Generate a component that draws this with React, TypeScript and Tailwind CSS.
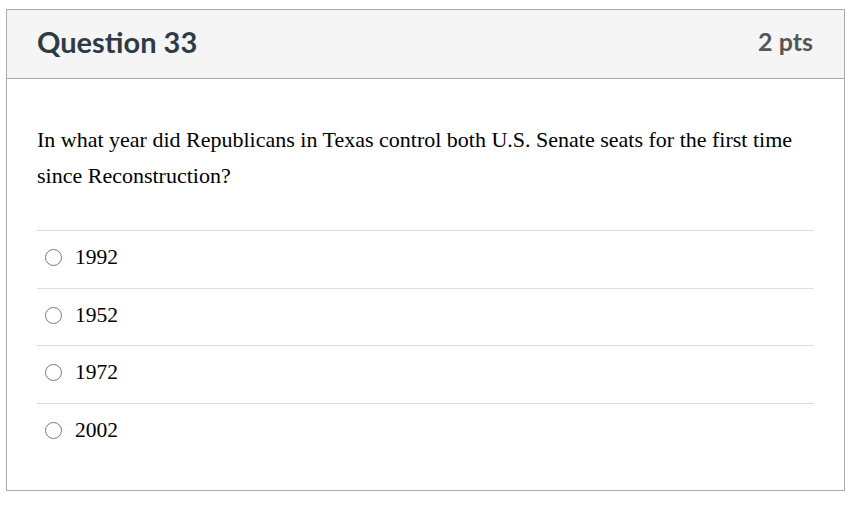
import React from "react";

const answers = ["1992", "1952", "1972", "2002"];

export default function App() {
  return (
    <div className="min-h-screen bg-white pt-[9px] pl-[6px]">
      <div className="w-[839px] border border-[#aaaaaa] bg-white">
        <div className="flex h-[69px] items-center justify-between border-b border-[#aaaaaa] bg-[#f5f5f5] pb-[4px] pl-[30px] pr-[31px] font-['Lato',sans-serif] font-bold">
          <h2 className="text-[29px] text-[#2d3b45]">Question 33</h2>
          <div className="text-[25px] text-[#565656]">2 pts</div>
        </div>
        <div className="px-[30px] pt-[43px] pb-[30px] font-['Liberation_Serif',serif] text-[22px] text-black">
          <p className="leading-[36px]">
            In what year did Republicans in Texas control both U.S. Senate seats for the first time since Reconstruction?
          </p>
          <div className="mt-[36px]">
            {answers.map((a) => (
              <label
                key={a}
                className="flex h-[57.6px] items-center border-t border-[#dddddd] pb-[3px] pl-[8px]"
              >
                <span className="h-[17px] w-[17px] rounded-full border-[1.5px] border-[#7a7a7a] bg-white" />
                <span className="ml-[13px] text-[21.5px] leading-none">{a}</span>
              </label>
            ))}
          </div>
        </div>
      </div>
    </div>
  );
}
